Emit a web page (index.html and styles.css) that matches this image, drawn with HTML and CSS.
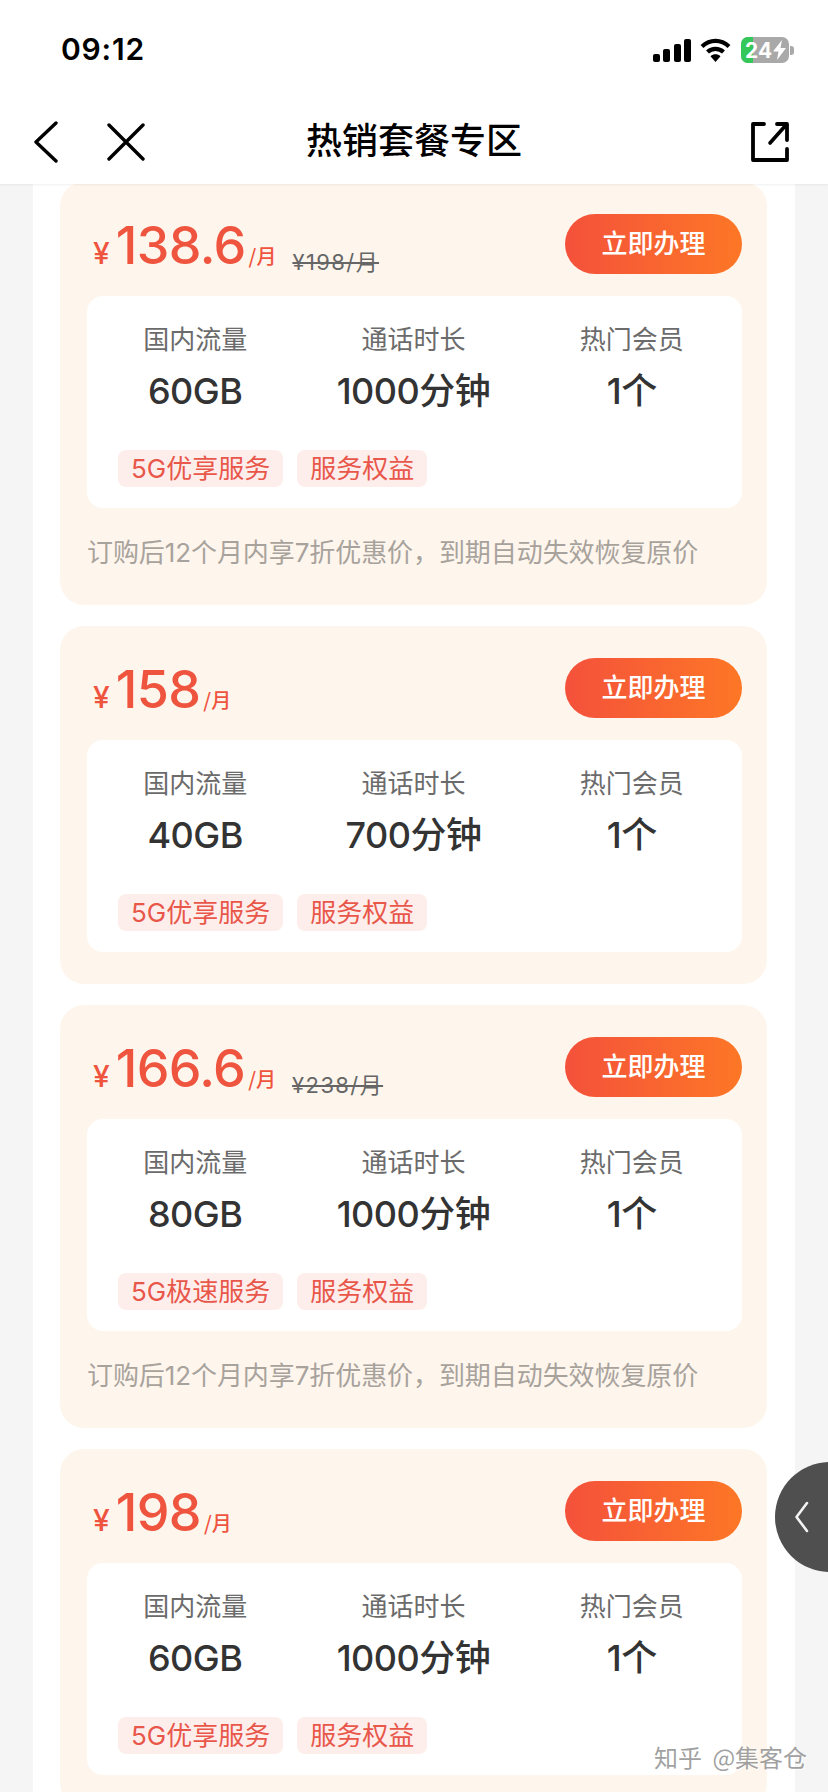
FILE: index.html
```html
<!DOCTYPE html>
<html lang="zh">
<head>
<meta charset="utf-8">
<title>热销套餐专区</title>
<link rel="stylesheet" href="styles.css">
</head>
<body>
<div class="phone">
  <header class="top">
    <div class="status">
      <span class="time">09:12</span>
      <div class="status-icons">
        <svg class="i-signal" width="38" height="23" viewBox="0 0 38 23"><rect x="0" y="15" width="7" height="8" rx="2"/><rect x="10" y="10" width="7" height="13" rx="2"/><rect x="21" y="5" width="7" height="18" rx="2"/><rect x="31" y="0" width="7" height="23" rx="2"/></svg>
        <svg class="i-wifi" width="31" height="24" viewBox="0 0 31 24"><path d="M2 8.5C10 1 21 1 29 8.5" fill="none" stroke="#000" stroke-width="4.2"/><path d="M7.5 14C12 9.8 19 9.8 23.5 14" fill="none" stroke="#000" stroke-width="4.2"/><path d="M10.5 18.2C13.5 15.6 17.5 15.6 20.5 18.2L15.5 24Z"/></svg>
        <div class="battery">
          <div class="batt-body"><span class="batt-fill"></span><span class="batt-num">24</span><svg class="batt-bolt" width="13" height="20" viewBox="0 0 13 20"><path d="M9 0L0 11.5H5.5L4 20L13 8H7.5Z" fill="#fff"/></svg></div>
          <span class="batt-nub"></span>
        </div>
      </div>
    </div>
    <nav class="nav">
      <div class="nav-left">
        <svg width="24" height="42" viewBox="0 0 24 42"><path d="M22 2L2 21L22 40" fill="none" stroke="#000" stroke-width="3.4" stroke-linecap="round" stroke-linejoin="round"/></svg>
        <svg width="38" height="38" viewBox="0 0 38 38"><path d="M2 2L36 36M36 2L2 36" fill="none" stroke="#000" stroke-width="3.4" stroke-linecap="round"/></svg>
      </div>
      <h1 class="title">热销套餐专区</h1>
      <svg class="share" width="38" height="40" viewBox="0 0 38 40"><path d="M13 2H2V38H36V27" fill="none" stroke="#000" stroke-width="3.800" stroke-linecap="round" stroke-linejoin="round"/><path d="M26 2H36V18" fill="none" stroke="#000" stroke-width="3.800" stroke-linecap="round" stroke-linejoin="round"/><path d="M19 21L35 3" fill="none" stroke="#000" stroke-width="3.600" stroke-linecap="round"/></svg>
    </nav>
  </header>

  <main class="scroll">
    <div class="column">
      <section class="card">
        <div class="card-head">
          <div class="price"><span class="yen">¥</span><span class="amount">138.6</span><span class="per">/月</span><s class="old">¥198/月</s></div>
          <button class="buy">立即办理</button>
        </div>
        <div class="panel">
          <div class="specs">
            <div class="spec"><span class="spec-label">国内流量</span><span class="spec-value">60GB</span></div>
            <div class="spec"><span class="spec-label">通话时长</span><span class="spec-value">1000分钟</span></div>
            <div class="spec"><span class="spec-label">热门会员</span><span class="spec-value">1个</span></div>
          </div>
          <div class="tags"><span class="tag">5G优享服务</span><span class="tag">服务权益</span></div>
        </div>
        <p class="note">订购后12个月内享7折优惠价，到期自动失效恢复原价</p>
      </section>

      <section class="card">
        <div class="card-head">
          <div class="price"><span class="yen">¥</span><span class="amount">158</span><span class="per">/月</span></div>
          <button class="buy">立即办理</button>
        </div>
        <div class="panel">
          <div class="specs">
            <div class="spec"><span class="spec-label">国内流量</span><span class="spec-value">40GB</span></div>
            <div class="spec"><span class="spec-label">通话时长</span><span class="spec-value">700分钟</span></div>
            <div class="spec"><span class="spec-label">热门会员</span><span class="spec-value">1个</span></div>
          </div>
          <div class="tags"><span class="tag">5G优享服务</span><span class="tag">服务权益</span></div>
        </div>
      </section>

      <section class="card">
        <div class="card-head">
          <div class="price"><span class="yen">¥</span><span class="amount">166.6</span><span class="per">/月</span><s class="old">¥238/月</s></div>
          <button class="buy">立即办理</button>
        </div>
        <div class="panel">
          <div class="specs">
            <div class="spec"><span class="spec-label">国内流量</span><span class="spec-value">80GB</span></div>
            <div class="spec"><span class="spec-label">通话时长</span><span class="spec-value">1000分钟</span></div>
            <div class="spec"><span class="spec-label">热门会员</span><span class="spec-value">1个</span></div>
          </div>
          <div class="tags"><span class="tag">5G极速服务</span><span class="tag">服务权益</span></div>
        </div>
        <p class="note">订购后12个月内享7折优惠价，到期自动失效恢复原价</p>
      </section>

      <section class="card">
        <div class="card-head">
          <div class="price"><span class="yen">¥</span><span class="amount">198</span><span class="per">/月</span></div>
          <button class="buy">立即办理</button>
        </div>
        <div class="panel">
          <div class="specs">
            <div class="spec"><span class="spec-label">国内流量</span><span class="spec-value">60GB</span></div>
            <div class="spec"><span class="spec-label">通话时长</span><span class="spec-value">1000分钟</span></div>
            <div class="spec"><span class="spec-label">热门会员</span><span class="spec-value">1个</span></div>
          </div>
          <div class="tags"><span class="tag">5G优享服务</span><span class="tag">服务权益</span></div>
        </div>
      </section>
    </div>
  </main>

  <div class="float-tab">
    <svg width="15" height="32" viewBox="0 0 15 32"><path d="M13 2L2.500 16L13 30" fill="none" stroke="#f2f2f2" stroke-width="2.600" stroke-linecap="round" stroke-linejoin="round"/></svg>
  </div>
  <div class="watermark">知乎 @集客仓</div>
</div>
</body>
</html>
```
FILE: styles.css
```css
* { box-sizing: border-box; }
html, body { margin: 0; padding: 0; }
body {
  font-family: Inter, "Noto Sans CJK SC", sans-serif;
  background: #f5f5f5;
}
.phone {
  position: relative;
  width: 828px;
  height: 1792px;
  overflow: hidden;
  display: flex;
  flex-direction: column;
}
.top {
  position: relative;
  z-index: 2;
  flex: none;
  height: 184px;
  background: #fff;
  box-shadow: 0 1px 2px rgba(0, 0, 0, 0.06);
}
.status {
  height: 100px;
  padding: 0 34px 0 61px;
  display: flex;
  justify-content: space-between;
  align-items: center;
}
.time {
  font-size: 30px;
  font-weight: 600;
  color: #000;
  line-height: 1;
  letter-spacing: 0.8px;
  margin-bottom: 2px;
}
.status-icons { display: flex; align-items: center; gap: 9px; }
.battery { display: flex; align-items: center; gap: 1px; margin-left: 1px; }
.batt-body {
  position: relative;
  width: 48px;
  height: 26px;
  border-radius: 7px;
  background: #a9a9a9;
  overflow: hidden;
  display: flex;
  align-items: center;
  padding-left: 4px;
}
.batt-fill { position: absolute; left: 0; top: 0; bottom: 0; width: 12px; background: #34c759; }
.batt-num {
  position: relative;
  color: #fff;
  font-size: 21px;
  font-weight: 700;
  line-height: 1;
}
.batt-bolt { position: relative; margin-left: 1px; }
.batt-nub { width: 4px; height: 9px; background: #a9a9a9; border-radius: 0 3px 3px 0; }
.nav {
  position: relative;
  height: 84px;
  padding: 0 39px 0 34px;
  display: flex;
  justify-content: space-between;
  align-items: center;
}
.nav-left { display: flex; align-items: center; gap: 49px; }
.title {
  position: absolute;
  left: 0;
  right: 0;
  margin: 0 0 2px;
  text-align: center;
  font-size: 36px;
  font-weight: 500;
  color: #000;
  line-height: 50px;
}
.scroll {
  flex: 1;
  min-height: 0;
  overflow: hidden;
}
.column {
  width: 762px;
  margin: -2px 0 0 33px;
  padding: 0 28px 0 27px;
  background: #fff;
  display: flex;
  flex-direction: column;
  gap: 21px;
}
.card {
  background: #fef6ed;
  border-radius: 24px;
  padding: 32px 25px 32px 27px;
}
.card-head {
  display: flex;
  justify-content: space-between;
  align-items: center;
  height: 60px;
  margin-bottom: 22px;
}
.price {
  display: flex;
  align-items: baseline;
  color: #ef543f;
  padding: 4px 0 0 6px;
}
.yen { font-size: 30px; font-weight: 500; margin-right: 6px; }
.amount { font-size: 52px; font-weight: 500; line-height: 60px; letter-spacing: -0.6px; }
.per { font-size: 20px; font-weight: 500; margin-left: 3px; font-family: "Noto Sans CJK SC", sans-serif; }
.old {
  align-self: flex-end;
  font-size: 22px;
  line-height: 30px;
  color: #666;
  margin: 0 0 -1px 16px;
  letter-spacing: 1.4px;
}
.buy {
  width: 177px;
  height: 60px;
  border: 0;
  padding: 0 0 6px;
  border-radius: 30px;
  background: linear-gradient(90deg, #f4513b, #fd7726);
  color: #fff;
  font-family: "Noto Sans CJK SC", sans-serif;
  font-size: 26px;
  font-weight: 500;
}
.panel {
  background: #fff;
  border-radius: 16px;
  padding: 22px 0 20px;
  height: 212px;
}
.specs { display: grid; grid-template-columns: repeat(3, 1fr); margin: 0 1px 0 -1px; }
.spec { display: flex; flex-direction: column; align-items: center; }
.spec-label {
  font-size: 26px;
  line-height: 40px;
  color: #6b6b6b;
  font-family: "Noto Sans CJK SC", sans-serif;
}
.spec-value {
  margin-top: 8px;
  font-size: 36px;
  line-height: 50px;
  font-weight: 500;
  color: #333;
  letter-spacing: -0.5px;
}
.tags { display: flex; gap: 14px; margin: 34px 0 0 31px; }
.tag {
  height: 37px;
  padding: 0 13px;
  border-radius: 8px;
  background: #fdeeec;
  color: #e8574a;
  font-size: 26px;
  line-height: 37px;
}
.note {
  margin: 25px 0 0;
  font-size: 26px;
  line-height: 40px;
  color: #a8a29c;
  letter-spacing: -0.08px;
}
.float-tab {
  position: absolute;
  z-index: 3;
  left: 775px;
  top: 1462px;
  width: 110px;
  height: 110px;
  border-radius: 50%;
  background: #4f4f4f;
  padding: 39px 0 0 19px;
}
.float-tab svg { display: block; }
.watermark {
  position: absolute;
  z-index: 3;
  left: 654px;
  top: 1741px;
  font-family: "Noto Sans CJK SC", sans-serif;
  font-size: 24px;
  line-height: 32px;
  word-spacing: 5px;
  white-space: nowrap;
  color: rgba(130, 130, 130, 0.75);
  text-shadow: 1px 1px 0 rgba(255, 255, 255, 0.8);
}
```
